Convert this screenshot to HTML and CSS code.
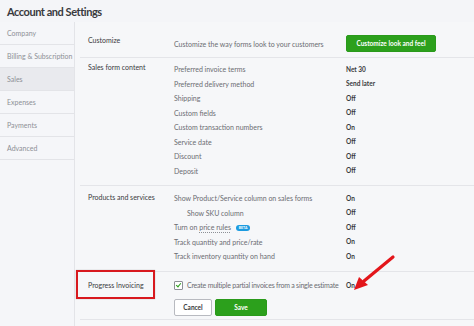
FILE: index.html
```html
<!DOCTYPE html>
<html lang="en">
  <head>
    <meta charset="UTF-8" />
    <meta name="viewport" content="width=device-width, initial-scale=1.0" />
    <link rel="stylesheet" href="styles.css">
    <title>Account and Settings</title>
  </head>
  <body>
    <h1 class="page-title">Account and Settings</h1>
    <div class="layout">
      <aside class="side-nav">
        <div class="nav-item">Company</div>
        <div class="nav-item">Billing &amp; Subscription</div>
        <div class="nav-item active">Sales</div>
        <div class="nav-item">Expenses</div>
        <div class="nav-item">Payments</div>
        <div class="nav-item">Advanced</div>
      </aside>

      <main class="settings">
        <section class="section customize">
          <div class="section-label">Customize</div>
          <div class="desc">Customize the way forms look to your customers</div>
          <div><button class="btn btn-green btn-wide">Customize look and feel</button></div>
        </section>

        <section class="section sales">
          <div class="section-label">Sales form content</div>
          <div class="rows">
            <div class="row"><span>Preferred invoice terms</span><b>Net 30</b></div>
            <div class="row"><span>Preferred delivery method</span><b>Send later</b></div>
            <div class="row"><span>Shipping</span><b>Off</b></div>
            <div class="row"><span>Custom fields</span><b>Off</b></div>
            <div class="row"><span>Custom transaction numbers</span><b>On</b></div>
            <div class="row"><span>Service date</span><b>Off</b></div>
            <div class="row"><span>Discount</span><b>Off</b></div>
            <div class="row"><span>Deposit</span><b>Off</b></div>
          </div>
        </section>

        <section class="section products">
          <div class="section-label">Products and services</div>
          <div class="rows">
            <div class="row"><span>Show Product/Service column on sales forms</span><b>On</b></div>
            <div class="row"><span class="indent">Show SKU column</span><b>Off</b></div>
            <div class="row"><span>Turn on <u class="dotted">price rules</u> <i class="beta">BETA</i></span><b>Off</b></div>
            <div class="row"><span>Track quantity and price/rate</span><b>On</b></div>
            <div class="row"><span>Track inventory quantity on hand</span><b>On</b></div>
          </div>
        </section>

        <section class="section progress">
          <div class="section-label highlight">Progress Invoicing</div>
          <div class="rows">
            <div class="row">
              <span class="check-line"><span class="checkbox"></span>Create multiple partial invoices from a single estimate</span><b>On</b>
            </div>
            <div class="actions">
              <button class="btn btn-white">Cancel</button>
              <button class="btn btn-green btn-save">Save</button>
            </div>
          </div>
          <svg class="arrow" width="48" height="40" viewBox="0 0 48 40">
            <line x1="43" y1="3" x2="14" y2="27" stroke="#e3161b" stroke-width="3.2" stroke-linecap="round" />
            <polygon points="4,36 9,23 18,31" fill="#e3161b" />
          </svg>
        </section>
      </main>
    </div>
  </body>
</html>
```

FILE: styles.css
```css
body {
  margin: 0;
  background: #f4f5f8;
  font-family: Lato, "Liberation Sans", sans-serif;
  color: #6b6c72;
  font-size: 7px;
}

.page-title {
  margin: 0;
  height: 22px;
  padding-left: 7px;
  line-height: 23px;
  font-size: 11px;
  font-weight: 700;
  letter-spacing: -0.45px;
  color: #393a3d;
}

.layout {
  display: flex;
}

.side-nav {
  width: 74px;
  height: 304px;
  border-right: 1px solid #e3e4e8;
  background: #f5f6f9;
}

.nav-item {
  height: 22px;
  line-height: 22px;
  padding-left: 7px;
  border-bottom: 1px solid #e3e4e8;
  color: #8d9096;
  white-space: nowrap;
}

.nav-item.active {
  background: #e9eaee;
}

.settings {
  flex: 1;
  padding-left: 5px;
  background: #f6f7f9;
}

.section {
  display: grid;
  grid-template-columns: 86px 1fr;
  padding-left: 8px;
  border-bottom: 1px solid #e4e5e9;
  position: relative;
}

.section-label {
  color: #393a3d;
  padding-top: 5px;
}

.section.customize {
  grid-template-columns: 86px 172px 1fr;
  align-items: center;
  padding-top: 13px;
  padding-bottom: 5px;
}

.section.customize .section-label {
  padding-top: 0;
  margin-top: -8px;
}

.rows {
  padding: 4px 0 7px;
}

.products .section-label {
  padding-top: 7px;
}

.products .rows {
  padding: 5px 0 7.5px;
}

.row {
  display: grid;
  grid-template-columns: 172px 1fr;
  height: 14.5px;
  align-items: center;
}

.row b {
  color: #393a3d;
  font-weight: 700;
  font-size: 6.5px;
}

.indent {
  padding-left: 13px;
}

.dotted {
  text-decoration: underline dotted #8d9096;
  text-underline-offset: 2px;
}

.beta {
  display: inline-block;
  font-style: normal;
  font-size: 3.5px;
  font-weight: 700;
  color: #fff;
  background: #1b9be0;
  border-radius: 4px;
  padding: 1px 3px;
  vertical-align: 1px;
  margin-left: 3px;
}

.btn {
  font-family: Lato, "Liberation Sans", sans-serif;
  font-size: 6.5px;
  font-weight: 700;
  border-radius: 2px;
  cursor: pointer;
}

.btn-green {
  background: #2ca01c;
  border: 1px solid #2a9a1b;
  color: #fff;
}

.btn-wide {
  width: 90px;
  height: 17px;
}

.section.progress {
  height: 47px;
}

.highlight {
  position: relative;
  padding-top: 9px;
}

.highlight::before {
  content: "";
  position: absolute;
  left: -12px;
  top: -2px;
  width: 75px;
  height: 25px;
  border: 2px solid #d8191e;
  box-shadow: 0 0 1px rgba(0, 0, 0, 0.3);
}

.progress .rows {
  padding-top: 6px;
}

.check-line {
  display: flex;
  align-items: center;
  letter-spacing: -0.22px;
  white-space: nowrap;
}

.checkbox {
  position: relative;
  width: 7px;
  height: 7px;
  border: 1px solid #8d9096;
  border-radius: 1px;
  background: #fff;
  margin-right: 4px;
}

.checkbox::after {
  content: "";
  position: absolute;
  left: 2px;
  top: 0;
  width: 2px;
  height: 4px;
  border: solid #2ca01c;
  border-width: 0 1px 1px 0;
  transform: rotate(40deg);
}

.actions {
  display: flex;
  gap: 3px;
  margin-top: 6px;
}

.btn-white {
  width: 38px;
  height: 17px;
  background: #fff;
  border: 1px solid #b8bac0;
  color: #393a3d;
}

.btn-save {
  width: 52px;
  height: 17px;
}

.arrow {
  position: absolute;
  left: 270px;
  top: -18px;
}
```
